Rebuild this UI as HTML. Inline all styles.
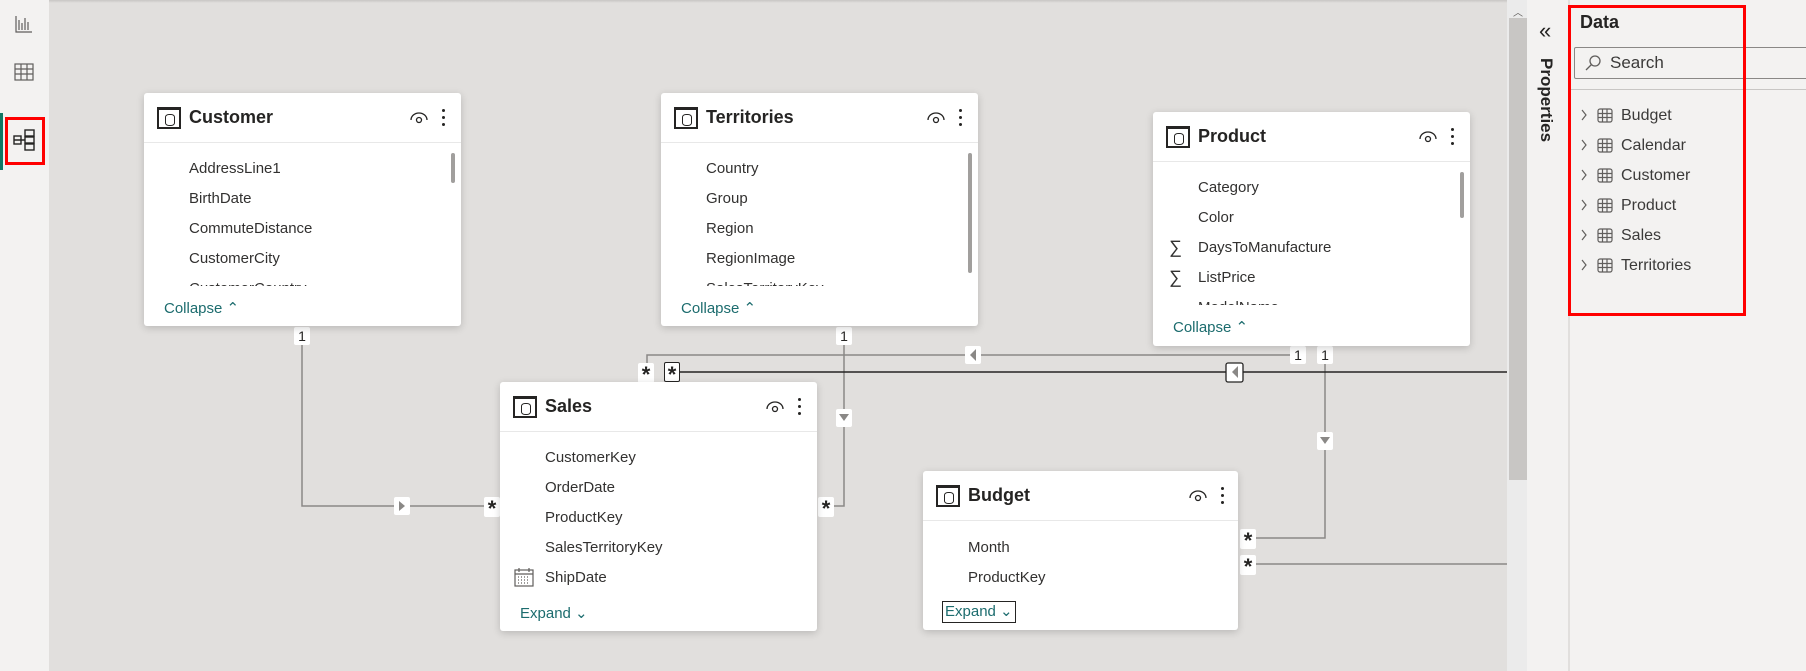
<!DOCTYPE html>
<html><head><meta charset="utf-8"><style>
*{margin:0;padding:0;box-sizing:border-box}
body{width:1806px;height:671px;overflow:hidden;background:#e1dfdd;font-family:"Liberation Sans",sans-serif;position:relative}
.abs{position:absolute}
.rail{left:0;top:0;width:49px;height:671px;background:#f3f2f1}
.card{position:absolute;background:#fff;border-radius:3px;box-shadow:0 2px 8px rgba(0,0,0,.18);overflow:hidden}
.hdr{position:absolute;left:0;right:0;top:0;height:50px;border-bottom:1px solid #e8e8e8}
.ttl{position:absolute;left:45px;top:14px;font-size:18px;font-weight:bold;color:#252423}
.ticon{position:absolute;left:13px;top:14px;width:24px;height:22px;border:2px solid #252423;border-top-width:3px}
.ticon:after{content:"";position:absolute;left:6px;top:4px;width:8px;height:10px;border:1.5px solid #252423;border-radius:4px/3px}
.eye{position:absolute;top:18px;width:18px;height:14px}
.dots{position:absolute;top:16px;width:4px;height:20px}
.dots i{display:block;width:3px;height:3px;background:#252423;border-radius:50%;margin-bottom:4px}
.f{position:absolute;left:45px;font-size:15px;color:#323130;white-space:nowrap}
.clip{position:absolute;left:0;right:0;overflow:hidden}
.lnk{position:absolute;left:20px;font-size:15px;color:#1c6c6e}
.sb{position:absolute;right:6px;width:4px;height:30px;background:#a19f9d;border-radius:2px}
.badge{position:absolute;background:#fff;font-size:14px;color:#252423;text-align:center;line-height:18px;width:16px;height:18px;border-radius:2px}
.st{font-size:22px;font-weight:bold;line-height:24px}
.di{position:absolute;left:1585px;font-size:16px;color:#3b3a39}
</style></head><body>
<div class="abs rail"></div>
<div class="abs" style="left:49px;top:0;width:1458px;height:3px;background:linear-gradient(#c8c6c4,#e1dfdd)"></div>
<svg class="abs" style="left:14px;top:14px" width="20" height="20" viewBox="0 0 20 20" fill="none" stroke="#605e5c" stroke-width="1.2"><path d="M2 2v16h16M5 16V6M8 16V9M11 16V4M14 16V8"/></svg>
<svg class="abs" style="left:14px;top:62px" width="20" height="20" viewBox="0 0 20 20" fill="none" stroke="#605e5c" stroke-width="1.2"><rect x="1" y="2" width="18" height="16"/><path d="M1 7h18M1 12h18M7 2v16M13 2v16"/></svg>
<div class="abs" style="left:0;top:113px;width:3px;height:57px;background:#117865"></div>
<div class="abs" style="left:5px;top:117px;width:40px;height:48px;border:3px solid #f00"></div>
<svg class="abs" style="left:13px;top:128px" width="24" height="24" viewBox="0 0 24 24" fill="none" stroke="#252423" stroke-width="1.4"><rect x="1" y="8" width="7" height="8"/><rect x="12" y="2" width="9" height="6"/><rect x="12" y="9" width="9" height="6"/><rect x="12" y="16" width="9" height="6"/><path d="M8 12h4M1 12h7"/></svg>

<svg class="abs" style="left:0;top:0" width="1806" height="671">
<g fill="none" stroke="#8a8886" stroke-width="1.5">
<path d="M302 340V506H492"/>
<path d="M844 340V506H829"/>
<path d="M647 372V355H1298"/>
<path d="M1325 362V538H1250"/>
<path d="M1250 564H1508"/>
</g>
<path d="M672 372H1508" stroke="#252423" stroke-width="1.6"/>
<g>
<rect x="394" y="497" width="16" height="18" rx="2" fill="#fff"/><path d="M399 501l6 5-6 5z" fill="#8a8886"/>
<rect x="836" y="409" width="16" height="18" rx="2" fill="#fff"/><path d="M839 414h10l-5 7z" fill="#8a8886"/>
<rect x="965" y="346" width="16" height="18" rx="2" fill="#fff"/><path d="M976 349v12l-6-6z" fill="#8a8886"/>
<rect x="1317" y="432" width="16" height="18" rx="2" fill="#fff"/><path d="M1320 437h10l-5 7z" fill="#8a8886"/>
<rect x="1226" y="363" width="17" height="19" rx="2" fill="#fff" stroke="#252423" stroke-width="1.3"/><path d="M1238 366v12l-6-6z" fill="#8a8886"/>
</g>
</svg>
<div class="badge" style="left:294px;top:327px">1</div>
<div class="badge" style="left:836px;top:327px">1</div>
<div class="badge" style="left:1290px;top:346px">1</div>
<div class="badge" style="left:1317px;top:346px">1</div>
<div class="badge st" style="left:638px;top:363px;height:20px">*</div>
<div class="badge st" style="left:664px;top:362px;height:20px;border:1.3px solid #252423">*</div>
<div class="badge st" style="left:484px;top:497px;height:20px">*</div>
<div class="badge st" style="left:818px;top:497px;height:20px">*</div>
<div class="badge st" style="left:1240px;top:529px;height:20px">*</div>
<div class="badge st" style="left:1240px;top:555px;height:20px">*</div>

<div class="card" style="left:144px;top:93px;width:317px;height:233px">
<div class="hdr"><div class="ticon"></div><div class="ttl">Customer</div>
<svg class="eye" style="left:266px" viewBox="0 0 18 14" fill="none" stroke="#252423" stroke-width="1.3"><path d="M1 9a8 7 0 0 1 16 0"/><circle cx="9" cy="9" r="2.5"/></svg>
<div class="dots" style="left:298px"><i></i><i></i><i></i></div></div>
<div class="clip" style="top:51px;height:142px">
<div class="f" style="top:16px">AddressLine1</div><div class="f" style="top:46px">BirthDate</div><div class="f" style="top:76px">CommuteDistance</div><div class="f" style="top:106px">CustomerCity</div><div class="f" style="top:136px">CustomerCountry</div></div>
<div class="sb" style="top:60px"></div>
<div class="lnk" style="top:206px">Collapse ⌃</div></div>

<div class="card" style="left:661px;top:93px;width:317px;height:233px">
<div class="hdr"><div class="ticon"></div><div class="ttl">Territories</div>
<svg class="eye" style="left:266px" viewBox="0 0 18 14" fill="none" stroke="#252423" stroke-width="1.3"><path d="M1 9a8 7 0 0 1 16 0"/><circle cx="9" cy="9" r="2.5"/></svg>
<div class="dots" style="left:298px"><i></i><i></i><i></i></div></div>
<div class="clip" style="top:51px;height:142px">
<div class="f" style="top:16px">Country</div><div class="f" style="top:46px">Group</div><div class="f" style="top:76px">Region</div><div class="f" style="top:106px">RegionImage</div><div class="f" style="top:136px">SalesTerritoryKey</div></div>
<div class="sb" style="top:60px;height:120px"></div>
<div class="lnk" style="top:206px">Collapse ⌃</div></div>

<div class="card" style="left:1153px;top:112px;width:317px;height:234px">
<div class="hdr"><div class="ticon"></div><div class="ttl">Product</div>
<svg class="eye" style="left:266px" viewBox="0 0 18 14" fill="none" stroke="#252423" stroke-width="1.3"><path d="M1 9a8 7 0 0 1 16 0"/><circle cx="9" cy="9" r="2.5"/></svg>
<div class="dots" style="left:298px"><i></i><i></i><i></i></div></div>
<div class="clip" style="top:51px;height:142px">
<div class="f" style="top:16px">Category</div><div class="f" style="top:46px">Color</div>
<div class="f" style="left:16px;top:74px;font-size:18px">∑</div><div class="f" style="top:76px">DaysToManufacture</div>
<div class="f" style="left:16px;top:104px;font-size:18px">∑</div><div class="f" style="top:106px">ListPrice</div><div class="f" style="top:136px">ModelName</div></div>
<div class="sb" style="top:60px;height:46px"></div>
<div class="lnk" style="top:206px">Collapse ⌃</div></div>

<div class="card" style="left:500px;top:382px;width:317px;height:249px">
<div class="hdr"><div class="ticon"></div><div class="ttl">Sales</div>
<svg class="eye" style="left:266px" viewBox="0 0 18 14" fill="none" stroke="#252423" stroke-width="1.3"><path d="M1 9a8 7 0 0 1 16 0"/><circle cx="9" cy="9" r="2.5"/></svg>
<div class="dots" style="left:298px"><i></i><i></i><i></i></div></div>
<div class="f" style="top:67px">CustomerKey</div><div class="f" style="top:97px">OrderDate</div><div class="f" style="top:127px">ProductKey</div><div class="f" style="top:157px">SalesTerritoryKey</div>
<svg class="abs" style="left:14px;top:185px" width="20" height="20" viewBox="0 0 20 20" fill="none" stroke="#605e5c" stroke-width="1.2"><rect x="1" y="3" width="18" height="16"/><path d="M1 7h18M5 1v4M15 1v4"/><path d="M4 10h12M4 13h12M4 16h12" stroke-dasharray="1 2"/></svg>
<div class="f" style="top:187px">ShipDate</div>
<div class="lnk" style="top:222px">Expand ⌄</div></div>

<div class="card" style="left:923px;top:471px;width:315px;height:159px">
<div class="hdr"><div class="ticon"></div><div class="ttl">Budget</div>
<svg class="eye" style="left:266px" viewBox="0 0 18 14" fill="none" stroke="#252423" stroke-width="1.3"><path d="M1 9a8 7 0 0 1 16 0"/><circle cx="9" cy="9" r="2.5"/></svg>
<div class="dots" style="left:298px"><i></i><i></i><i></i></div></div>
<div class="f" style="top:68px">Month</div><div class="f" style="top:98px">ProductKey</div>
<div class="lnk" style="left:19px;top:130px;border:1px solid #252423;padding:0 2px;line-height:20px">Expand ⌄</div></div>

<div class="abs" style="left:1507px;top:0;width:20px;height:671px;background:#ebebeb"></div>
<div class="abs" style="left:1509px;top:18px;width:18px;height:462px;background:#c8c6c4"></div>
<div class="abs" style="left:1513px;top:4px;font-size:10px;color:#605e5c">︿</div>
<div class="abs" style="left:1527px;top:0;width:42px;height:671px;background:#f3f2f1;border-right:1px solid #e1dfdd"></div>
<div class="abs" style="left:1539px;top:18px;font-size:22px;color:#252423">«</div>
<div class="abs" style="left:1536px;top:58px;font-size:17px;font-weight:bold;color:#252423;writing-mode:vertical-rl">Properties</div>
<div class="abs" style="left:1570px;top:0;width:236px;height:671px;background:#f3f2f1"></div>
<div class="abs" style="left:1580px;top:12px;font-size:18px;font-weight:bold;color:#252423">Data</div>
<div class="abs" style="left:1574px;top:47px;width:240px;height:32px;border:1px solid #8a8886;border-radius:2px"></div>
<svg class="abs" style="left:1584px;top:54px" width="18" height="18" viewBox="0 0 18 18" fill="none" stroke="#605e5c" stroke-width="1.3"><circle cx="11" cy="7" r="5"/><path d="M7.5 10.5L2 16"/></svg>
<div class="abs" style="left:1610px;top:53px;font-size:17px;color:#3b3a39">Search</div>
<div class="abs" style="left:1570px;top:89px;width:236px;height:1px;background:#c8c6c4"></div>
<svg class="abs" style="left:1580px;top:105px" width="40" height="190" fill="none" stroke="#605e5c" stroke-width="1.2">
<g id="r"><path d="M2 5l4 5-4 5"/><rect x="18" y="4" width="14" height="13" rx="2"/><path d="M18 8.5h14M18 12.5h14M22.5 4v13M27 4v13"/></g>
<use href="#r" y="30"/><use href="#r" y="60"/><use href="#r" y="90"/><use href="#r" y="120"/><use href="#r" y="150"/></svg>
<div class="di" style="left:1621px;top:107px">Budget</div>
<div class="di" style="left:1621px;top:137px">Calendar</div>
<div class="di" style="left:1621px;top:167px">Customer</div>
<div class="di" style="left:1621px;top:197px">Product</div>
<div class="di" style="left:1621px;top:227px">Sales</div>
<div class="di" style="left:1621px;top:257px">Territories</div>
<div class="abs" style="left:1568px;top:5px;width:178px;height:311px;border:3px solid #f00"></div>
</body></html>
